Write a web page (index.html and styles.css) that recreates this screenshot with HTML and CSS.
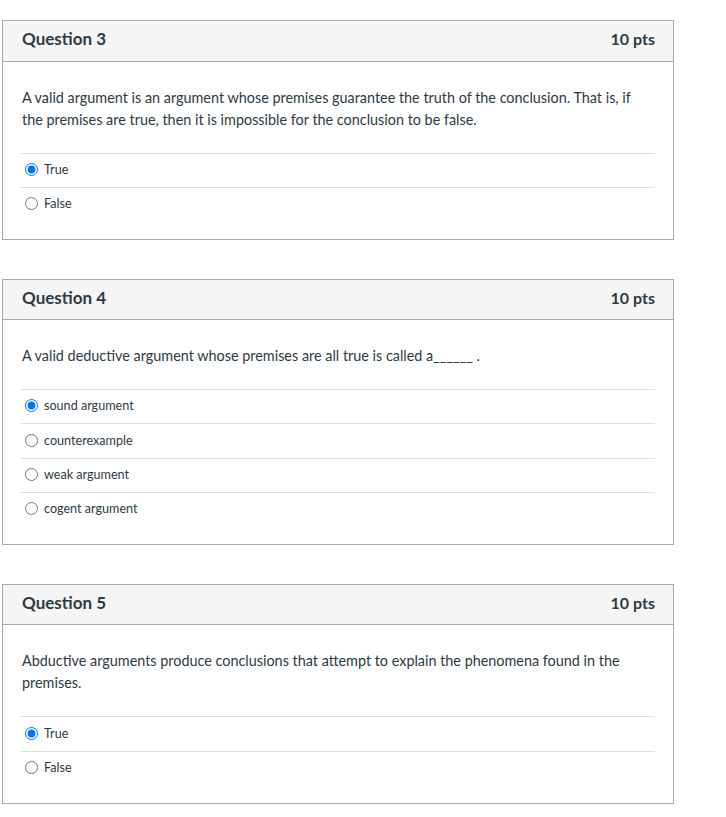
FILE: index.html
```html
<!DOCTYPE html>
<html>
<head>
<meta charset="utf-8">
<link rel="stylesheet" href="styles.css">
</head>
<body>
<div class="quiz">
  <div class="card">
    <div class="header"><span class="title">Question 3</span><span class="pts">10 pts</span></div>
    <div class="body">
      <div class="qtext">A valid argument is an argument whose premises guarantee the truth of the conclusion. That is, if the premises are true, then it is impossible for the conclusion to be false.</div>
      <div class="answers">
        <label class="row"><input type="radio" name="q3" checked><span>True</span></label>
        <label class="row"><input type="radio" name="q3"><span>False</span></label>
      </div>
    </div>
  </div>
  <div class="card">
    <div class="header"><span class="title">Question 4</span><span class="pts">10 pts</span></div>
    <div class="body">
      <div class="qtext">A valid deductive argument whose premises are all true is called a______ .</div>
      <div class="answers">
        <label class="row"><input type="radio" name="q4" checked><span>sound argument</span></label>
        <label class="row"><input type="radio" name="q4"><span>counterexample</span></label>
        <label class="row"><input type="radio" name="q4"><span>weak argument</span></label>
        <label class="row"><input type="radio" name="q4"><span>cogent argument</span></label>
      </div>
    </div>
  </div>
  <div class="card">
    <div class="header"><span class="title">Question 5</span><span class="pts">10 pts</span></div>
    <div class="body">
      <div class="qtext">Abductive arguments produce conclusions that attempt to explain the phenomena found in the premises.</div>
      <div class="answers">
        <label class="row"><input type="radio" name="q5" checked><span>True</span></label>
        <label class="row"><input type="radio" name="q5"><span>False</span></label>
      </div>
    </div>
  </div>
</div>
</body>
</html>
```
FILE: styles.css
```css
html, body {
  margin: 0;
  padding: 0;
  background: #fff;
}
body {
  font-family: Lato, "Open Sans", sans-serif;
  color: #2d3b45;
}
.quiz {
  display: flex;
  flex-direction: column;
  gap: 38.5px;
  padding: 20px 0 0 2px;
  width: 672px;
}
.card {
  border: 1px solid #aaaaaa;
}
.header {
  height: 40.5px;
  box-sizing: border-box;
  background: #f5f5f5;
  border-bottom: 1px solid #aaaaaa;
  display: flex;
  align-items: center;
  justify-content: space-between;
  padding: 0 18px 4px 19px;
}
.title {
  font-weight: 700;
  font-size: 17px;
}
.pts {
  font-weight: 700;
  font-size: 16px;
}
.body {
  padding: 25px 18px 18px 18px;
}
.qtext {
  font-size: 14.4px;
  line-height: 22px;
  padding-left: 1px;
  margin-bottom: 22px;
  padding-right: 12px;
}
.answers {
  display: flex;
  flex-direction: column;
}
.row {
  height: 34.33px;
  box-sizing: border-box;
  padding-bottom: 2px;
  border-top: 1px solid #dddddd;
  display: flex;
  align-items: center;
  font-size: 12.6px;
}
.row input {
  margin: 0 6px 0 4px;
  width: 13px;
  height: 13px;
}
```
